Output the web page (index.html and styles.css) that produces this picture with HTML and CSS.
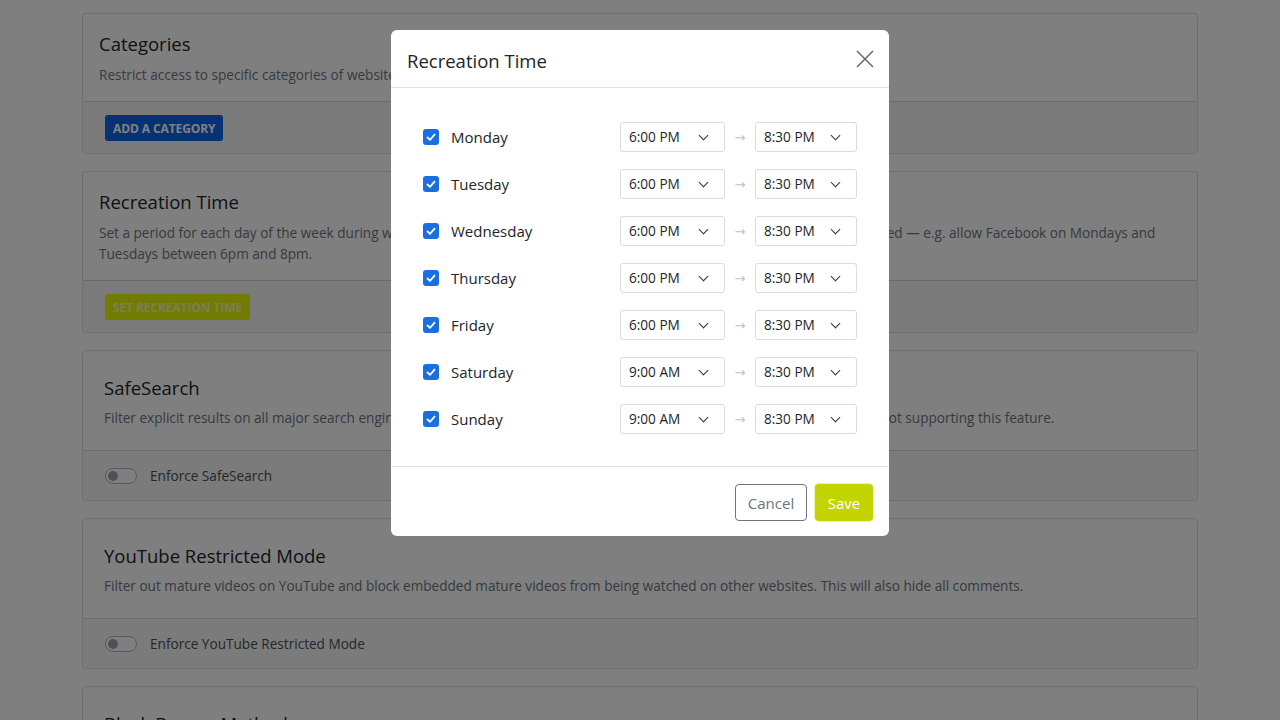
FILE: index.html
```html
<!DOCTYPE html>
<html lang="en">
<head>
    <meta charset="UTF-8">
    <meta name="viewport" content="width=device-width, initial-scale=1.0">
    <title>Settings - Recreation Time</title>
    <link rel="stylesheet" href="styles.css">
</head>
<body>
    <div class="page">
        <div class="card">
            <div class="card-body">
                <h2 class="card-title">Categories</h2>
                <p class="card-text">Restrict access to specific categories of websites, such as adult content, gambling, dating or social networks.</p>
            </div>
            <div class="card-footer">
                <button class="btn btn-blue">Add a category</button>
            </div>
        </div>

        <div class="card">
            <div class="card-body">
                <h2 class="card-title">Recreation Time</h2>
                <p class="card-text">Set a period for each day of the week during which websites from the denylist or blocked categories will be temporarily allowed — e.g. allow Facebook on Mondays and Tuesdays between 6pm and 8pm.</p>
            </div>
            <div class="card-footer">
                <button class="btn btn-lime">Set recreation time</button>
            </div>
        </div>

        <div class="card card-wide">
            <div class="card-body">
                <h2 class="card-title">SafeSearch</h2>
                <p class="card-text">Filter explicit results on all major search engines (Google, Bing, DuckDuckGo, Yahoo!…) and block search engines which are not supporting this feature.</p>
            </div>
            <div class="card-footer">
                <label class="switch"><span class="switch-track"></span>Enforce SafeSearch</label>
            </div>
        </div>

        <div class="card card-wide">
            <div class="card-body">
                <h2 class="card-title">YouTube Restricted Mode</h2>
                <p class="card-text">Filter out mature videos on YouTube and block embedded mature videos from being watched on other websites. This will also hide all comments.</p>
            </div>
            <div class="card-footer">
                <label class="switch"><span class="switch-track"></span>Enforce YouTube Restricted Mode</label>
            </div>
        </div>

        <div class="card card-wide">
            <div class="card-body">
                <h2 class="card-title">Block Bypass Methods</h2>
                <p class="card-text">Block VPNs, proxies and other tools that could be used to get around the restrictions.</p>
            </div>
            <div class="card-footer">
                <label class="switch"><span class="switch-track"></span>Block Bypass Methods</label>
            </div>
        </div>
    </div>

    <div class="backdrop">
        <div class="modal">
            <div class="modal-header">
                <h3 class="modal-title">Recreation Time</h3>
                <button class="close" aria-label="Close">
                    <svg width="20" height="20" viewBox="0 0 20 20"><path d="M2 2 L18 18 M18 2 L2 18" stroke="#6c6c6c" stroke-width="1.6" fill="none"/></svg>
                </button>
            </div>

            <div class="modal-body">
                <div class="day-row">
                    <span class="check"><svg width="10" height="8" viewBox="0 0 10 8"><path d="M1 4 L4 6.8 L9 1.2" stroke="#fff" stroke-width="1.8" fill="none"/></svg></span>
                    <span class="day-name">Monday</span>
                    <div class="time-select">6:00 PM<span class="chev"></span></div>
                    <span class="to">→</span>
                    <div class="time-select">8:30 PM<span class="chev"></span></div>
                </div>
                <div class="day-row">
                    <span class="check"><svg width="10" height="8" viewBox="0 0 10 8"><path d="M1 4 L4 6.8 L9 1.2" stroke="#fff" stroke-width="1.8" fill="none"/></svg></span>
                    <span class="day-name">Tuesday</span>
                    <div class="time-select">6:00 PM<span class="chev"></span></div>
                    <span class="to">→</span>
                    <div class="time-select">8:30 PM<span class="chev"></span></div>
                </div>
                <div class="day-row">
                    <span class="check"><svg width="10" height="8" viewBox="0 0 10 8"><path d="M1 4 L4 6.8 L9 1.2" stroke="#fff" stroke-width="1.8" fill="none"/></svg></span>
                    <span class="day-name">Wednesday</span>
                    <div class="time-select">6:00 PM<span class="chev"></span></div>
                    <span class="to">→</span>
                    <div class="time-select">8:30 PM<span class="chev"></span></div>
                </div>
                <div class="day-row">
                    <span class="check"><svg width="10" height="8" viewBox="0 0 10 8"><path d="M1 4 L4 6.8 L9 1.2" stroke="#fff" stroke-width="1.8" fill="none"/></svg></span>
                    <span class="day-name">Thursday</span>
                    <div class="time-select">6:00 PM<span class="chev"></span></div>
                    <span class="to">→</span>
                    <div class="time-select">8:30 PM<span class="chev"></span></div>
                </div>
                <div class="day-row">
                    <span class="check"><svg width="10" height="8" viewBox="0 0 10 8"><path d="M1 4 L4 6.8 L9 1.2" stroke="#fff" stroke-width="1.8" fill="none"/></svg></span>
                    <span class="day-name">Friday</span>
                    <div class="time-select">6:00 PM<span class="chev"></span></div>
                    <span class="to">→</span>
                    <div class="time-select">8:30 PM<span class="chev"></span></div>
                </div>
                <div class="day-row">
                    <span class="check"><svg width="10" height="8" viewBox="0 0 10 8"><path d="M1 4 L4 6.8 L9 1.2" stroke="#fff" stroke-width="1.8" fill="none"/></svg></span>
                    <span class="day-name">Saturday</span>
                    <div class="time-select">9:00 AM<span class="chev"></span></div>
                    <span class="to">→</span>
                    <div class="time-select">8:30 PM<span class="chev"></span></div>
                </div>
                <div class="day-row">
                    <span class="check"><svg width="10" height="8" viewBox="0 0 10 8"><path d="M1 4 L4 6.8 L9 1.2" stroke="#fff" stroke-width="1.8" fill="none"/></svg></span>
                    <span class="day-name">Sunday</span>
                    <div class="time-select">9:00 AM<span class="chev"></span></div>
                    <span class="to">→</span>
                    <div class="time-select">8:30 PM<span class="chev"></span></div>
                </div>
            </div>

            <div class="modal-footer">
                <button class="btn-outline">Cancel</button>
                <button class="btn-save">Save</button>
            </div>
        </div>
    </div>
</body>
</html>
```

FILE: styles.css
```css
* {
    margin: 0;
    padding: 0;
    box-sizing: border-box;
}

body {
    background: #fff;
    font-family: "Open Sans", "Noto Sans", sans-serif;
    color: #212529;
    overflow: hidden;
}

.page {
    max-width: 1116px;
    margin: 13px auto 0;
    display: flex;
    flex-direction: column;
    gap: 17px;
}

.card {
    border: 1px solid rgba(0, 0, 0, 0.13);
    border-radius: 4px;
    background: #fff;
}

.card-body {
    padding: 17px 16px 16px;
}

.card-wide .card-body {
    padding: 24px 21px 22px;
}

.card-title {
    font-size: 18.5px;
    font-weight: normal;
    line-height: 26px;
    color: #212529;
}

.card-title + .card-text {
    margin-top: 7px;
}

.card-wide .card-title + .card-text {
    margin-top: 6px;
}

.card-text {
    font-size: 13.6px;
    line-height: 21px;
    color: #6c757d;
}

.card-footer {
    border-top: 1px solid rgba(0, 0, 0, 0.13);
    background: #f7f7f7;
    padding: 13px 22px 12px;
}

.btn {
    border: none;
    border-radius: 3px;
    height: 26px;
    padding: 0 8px;
    font-family: "Open Sans", sans-serif;
    font-size: 12px;
    font-weight: bold;
    text-transform: uppercase;
    letter-spacing: -0.1px;
    color: #fff;
}

.btn-blue {
    background: #0d63e6;
}

.btn-lime {
    background: #e2f800;
    color: #f4ffb0;
}

.switch {
    display: flex;
    align-items: center;
    gap: 13px;
    font-size: 13.6px;
    line-height: 24px;
    color: #495057;
}

.switch-track {
    position: relative;
    width: 32px;
    height: 16px;
    border: 1px solid #adb5bd;
    border-radius: 8px;
    background: #fff;
}

.switch-track::after {
    content: "";
    position: absolute;
    left: 2px;
    top: 2px;
    width: 10px;
    height: 10px;
    border-radius: 50%;
    background: #9aa1a8;
}

/* dialog */

.backdrop {
    position: fixed;
    inset: 0;
    background: rgba(0, 0, 0, 0.5);
    display: flex;
    justify-content: center;
    align-items: flex-start;
    padding-top: 30px;
}

.modal {
    width: 498px;
    background: #fff;
    border-radius: 6px;
}

.modal-header {
    display: flex;
    justify-content: space-between;
    align-items: center;
    padding: 18px 14px 13px 16px;
    border-bottom: 1px solid #dee2e6;
}

.modal-title {
    font-size: 18.5px;
    font-weight: normal;
    line-height: 26px;
    color: #212529;
}

.close {
    background: none;
    border: none;
    width: 20px;
    height: 20px;
    margin-top: -4px;
    display: flex;
}

.modal-body {
    padding: 33px 32px 32px;
    display: flex;
    flex-direction: column;
    gap: 16px;
}

.day-row {
    display: flex;
    align-items: center;
    height: 31px;
}

.check {
    width: 16px;
    height: 16px;
    border-radius: 3px;
    background: #1a6fe0;
    display: flex;
    align-items: center;
    justify-content: center;
    margin-right: 12px;
}

.day-name {
    flex: 1;
    font-size: 15px;
    color: #212529;
}

.time-select {
    position: relative;
    width: 105px;
    height: 30px;
    border: 1px solid #dcdcdc;
    border-radius: 3px;
    padding-left: 8px;
    font-size: 13.6px;
    line-height: 28px;
    color: #212529;
}

.time-select:last-child {
    width: 102px;
}

.chev {
    position: absolute;
    right: 17px;
    top: 9px;
    width: 7px;
    height: 7px;
    border-right: 1.5px solid #333;
    border-bottom: 1.5px solid #333;
    transform: rotate(45deg);
}

.to {
    width: 30px;
    padding-top: 3px;
    text-align: center;
    font-family: "DejaVu Sans", sans-serif;
    font-size: 13px;
    line-height: 14px;
    color: #c2c2c2;
}

.modal-footer {
    display: flex;
    justify-content: flex-end;
    gap: 8px;
    padding: 17px 16px 15px;
    border-top: 1px solid #dee2e6;
}

.btn-outline,
.btn-save {
    height: 37px;
    border-radius: 4px;
    font-family: "Open Sans", sans-serif;
    font-size: 15px;
}

.btn-outline {
    width: 72px;
    background: #fff;
    border: 1px solid #6c757d;
    color: #6c757d;
}

.btn-save {
    width: 58px;
    background: #c3d400;
    border: none;
    color: #fff;
    box-shadow: 0 0 0 1px rgba(225, 235, 120, 0.6);
}
```
